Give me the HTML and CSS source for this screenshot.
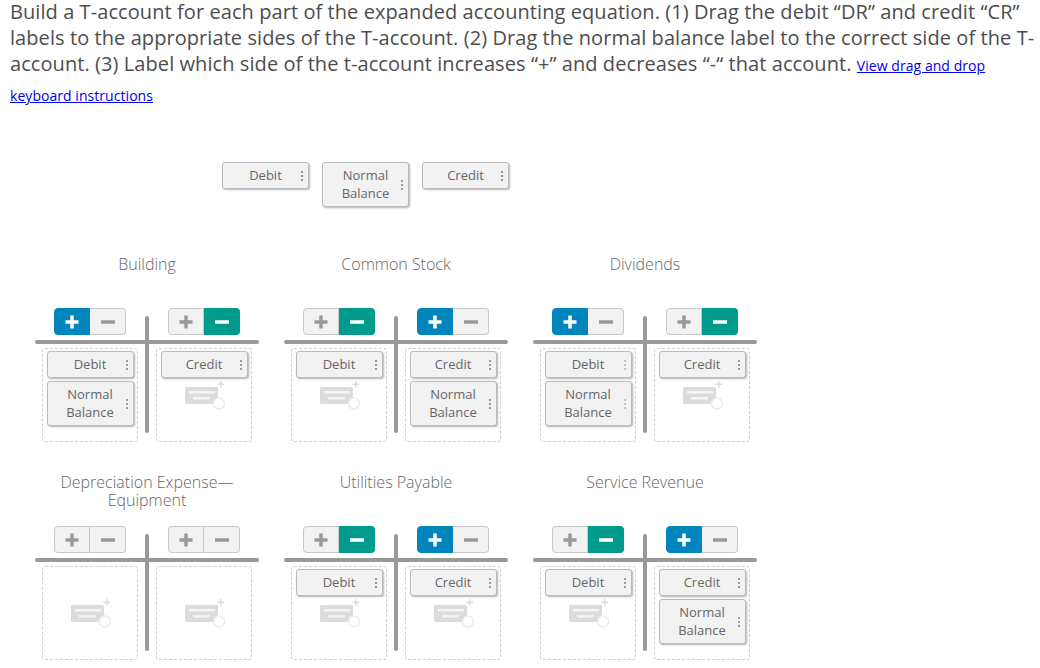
FILE: index.html
```html
<!DOCTYPE html>
<html lang="en">

<head>
    <meta charset="UTF-8">
    <meta name="viewport" content="width=device-width, initial-scale=1.0">
    <title>T-accounts</title>
    <link rel="stylesheet" href="styles.css">
</head>

<body>
    <svg class="icon-defs" width="0" height="0">
        <symbol id="icon-plus" viewBox="0 0 14 14">
            <path d="M5.250 0.500h3.500v4.750h4.750v3.500h-4.750v4.750h-3.500v-4.750h-4.750v-3.500h4.750z" fill="currentColor" />
        </symbol>
        <symbol id="icon-minus" viewBox="0 0 14 14">
            <rect x="0" y="5.250" width="14" height="3.500" fill="currentColor" />
        </symbol>
        <symbol id="icon-drop" viewBox="0 0 42 32">
            <rect x="2" y="8" width="33" height="17" rx="1.500" fill="#dcdcdc" />
            <rect x="6" y="12" width="26" height="2.500" fill="#f4f4f4" />
            <rect x="10" y="18" width="17" height="2.500" fill="#f4f4f4" />
            <circle cx="36" cy="24.500" r="5.500" fill="#fff" stroke="#ececec" stroke-width="1.500" />
            <path d="M37 2h1.500v2.500h2.500v1.500h-2.500v2.500h-1.500v-2.500h-2.500v-1.500h2.500z" fill="#dcdcdc" />
        </symbol>
    </svg>

    <p class="intro">
        Build a T-account for each part of the expanded accounting equation. (1) Drag the debit “DR” and credit “CR” labels to the appropriate sides of the T-account. (2) Drag the normal balance label to the correct side of the T-account. (3) Label which side of the t-account increases “+” and decreases “-“ that account.
        <a class="help-link" href="#">View drag and drop</a>
        <a class="help-link help-link-rest" href="#">keyboard instructions</a>
    </p>

    <div class="label-bank">
        <div class="tag">Debit</div>
        <div class="tag">Normal<br>Balance</div>
        <div class="tag">Credit</div>
    </div>

    <div class="account-grid">
        <!-- Building -->
        <section class="account">
            <h2 class="account-title">Building</h2>
            <div class="t-account">
                <div class="side-head">
                    <div class="sign-toggle">
                        <button class="sign-btn plus-on"><svg><use href="#icon-plus" /></svg></button>
                        <button class="sign-btn"><svg><use href="#icon-minus" /></svg></button>
                    </div>
                    <div class="sign-toggle">
                        <button class="sign-btn"><svg><use href="#icon-plus" /></svg></button>
                        <button class="sign-btn minus-on"><svg><use href="#icon-minus" /></svg></button>
                    </div>
                </div>
                <div class="t-rule"></div>
                <div class="side-body">
                    <div class="drop-zone">
                        <div class="tag">Debit</div>
                        <div class="tag">Normal<br>Balance</div>
                    </div>
                    <div class="drop-zone">
                        <div class="tag">Credit</div>
                        <svg class="drop-icon"><use href="#icon-drop" /></svg>
                    </div>
                </div>
            </div>
        </section>

        <!-- Common Stock -->
        <section class="account">
            <h2 class="account-title">Common Stock</h2>
            <div class="t-account">
                <div class="side-head">
                    <div class="sign-toggle">
                        <button class="sign-btn"><svg><use href="#icon-plus" /></svg></button>
                        <button class="sign-btn minus-on"><svg><use href="#icon-minus" /></svg></button>
                    </div>
                    <div class="sign-toggle">
                        <button class="sign-btn plus-on"><svg><use href="#icon-plus" /></svg></button>
                        <button class="sign-btn"><svg><use href="#icon-minus" /></svg></button>
                    </div>
                </div>
                <div class="t-rule"></div>
                <div class="side-body">
                    <div class="drop-zone">
                        <div class="tag">Debit</div>
                        <svg class="drop-icon"><use href="#icon-drop" /></svg>
                    </div>
                    <div class="drop-zone">
                        <div class="tag">Credit</div>
                        <div class="tag">Normal<br>Balance</div>
                    </div>
                </div>
            </div>
        </section>

        <!-- Dividends -->
        <section class="account">
            <h2 class="account-title">Dividends</h2>
            <div class="t-account">
                <div class="side-head">
                    <div class="sign-toggle">
                        <button class="sign-btn plus-on"><svg><use href="#icon-plus" /></svg></button>
                        <button class="sign-btn"><svg><use href="#icon-minus" /></svg></button>
                    </div>
                    <div class="sign-toggle">
                        <button class="sign-btn"><svg><use href="#icon-plus" /></svg></button>
                        <button class="sign-btn minus-on"><svg><use href="#icon-minus" /></svg></button>
                    </div>
                </div>
                <div class="t-rule"></div>
                <div class="side-body">
                    <div class="drop-zone">
                        <div class="tag faint-dots">Debit</div>
                        <div class="tag faint-dots">Normal<br>Balance</div>
                    </div>
                    <div class="drop-zone">
                        <div class="tag">Credit</div>
                        <svg class="drop-icon"><use href="#icon-drop" /></svg>
                    </div>
                </div>
            </div>
        </section>

        <!-- Depreciation Expense -->
        <section class="account">
            <h2 class="account-title">Depreciation Expense—Equipment</h2>
            <div class="t-account">
                <div class="side-head">
                    <div class="sign-toggle">
                        <button class="sign-btn"><svg><use href="#icon-plus" /></svg></button>
                        <button class="sign-btn"><svg><use href="#icon-minus" /></svg></button>
                    </div>
                    <div class="sign-toggle">
                        <button class="sign-btn"><svg><use href="#icon-plus" /></svg></button>
                        <button class="sign-btn"><svg><use href="#icon-minus" /></svg></button>
                    </div>
                </div>
                <div class="t-rule"></div>
                <div class="side-body">
                    <div class="drop-zone empty">
                        <svg class="drop-icon"><use href="#icon-drop" /></svg>
                    </div>
                    <div class="drop-zone empty">
                        <svg class="drop-icon"><use href="#icon-drop" /></svg>
                    </div>
                </div>
            </div>
        </section>

        <!-- Utilities Payable -->
        <section class="account">
            <h2 class="account-title">Utilities Payable</h2>
            <div class="t-account">
                <div class="side-head">
                    <div class="sign-toggle">
                        <button class="sign-btn"><svg><use href="#icon-plus" /></svg></button>
                        <button class="sign-btn minus-on"><svg><use href="#icon-minus" /></svg></button>
                    </div>
                    <div class="sign-toggle">
                        <button class="sign-btn plus-on"><svg><use href="#icon-plus" /></svg></button>
                        <button class="sign-btn"><svg><use href="#icon-minus" /></svg></button>
                    </div>
                </div>
                <div class="t-rule"></div>
                <div class="side-body">
                    <div class="drop-zone">
                        <div class="tag">Debit</div>
                        <svg class="drop-icon"><use href="#icon-drop" /></svg>
                    </div>
                    <div class="drop-zone">
                        <div class="tag">Credit</div>
                        <svg class="drop-icon"><use href="#icon-drop" /></svg>
                    </div>
                </div>
            </div>
        </section>

        <!-- Service Revenue -->
        <section class="account">
            <h2 class="account-title">Service Revenue</h2>
            <div class="t-account">
                <div class="side-head">
                    <div class="sign-toggle">
                        <button class="sign-btn"><svg><use href="#icon-plus" /></svg></button>
                        <button class="sign-btn minus-on"><svg><use href="#icon-minus" /></svg></button>
                    </div>
                    <div class="sign-toggle">
                        <button class="sign-btn plus-on"><svg><use href="#icon-plus" /></svg></button>
                        <button class="sign-btn"><svg><use href="#icon-minus" /></svg></button>
                    </div>
                </div>
                <div class="t-rule"></div>
                <div class="side-body">
                    <div class="drop-zone">
                        <div class="tag">Debit</div>
                        <svg class="drop-icon"><use href="#icon-drop" /></svg>
                    </div>
                    <div class="drop-zone">
                        <div class="tag">Credit</div>
                        <div class="tag">Normal<br>Balance</div>
                    </div>
                </div>
            </div>
        </section>
    </div>
</body>

</html>
```

FILE: styles.css
```css
* {
    box-sizing: border-box;
}

body {
    margin: 0;
    font-family: "Open Sans", "Liberation Sans", sans-serif;
    color: #666;
    background-color: #fff;
    overflow: hidden;
}

.icon-defs {
    position: absolute;
}

.intro {
    margin: -1px 0 0;
    padding: 0 0 0 10px;
    font-size: 20px;
    line-height: 26px;
    letter-spacing: 0.075px;
    color: #4d4d4d;
}

.help-link {
    font-size: 14px;
    letter-spacing: 0.05px;
    color: #00e;
}

.help-link-rest {
    display: block;
    margin-top: 4px;
}

.label-bank {
    display: flex;
    align-items: flex-start;
    gap: 13px;
    margin: 53px 0 0 222px;
}

.tag {
    position: relative;
    width: 87px;
    flex-shrink: 0;
    padding: 3px 8px 4px;
    font-size: 13px;
    line-height: 18px;
    text-align: center;
    background-color: #f2f2f2;
    border: 1px solid #bbb;
    border-radius: 3px;
    box-shadow: 1px 1px 2px rgba(0, 0, 0, 0.3);
}

.tag::after {
    content: "";
    position: absolute;
    right: 5px;
    top: 50%;
    width: 2px;
    height: 10px;
    margin-top: -5px;
    background: repeating-linear-gradient(#999 0 2px, transparent 2px 4px);
}

.faint-dots::after {
    background: repeating-linear-gradient(#c4c4c4 0 2px, transparent 2px 4px);
}

.account-grid {
    display: grid;
    grid-template-columns: repeat(3, 224px);
    column-gap: 25px;
    row-gap: 31px;
    margin: 48px 0 0 35px;
}

.account-title {
    height: 53px;
    margin: 0;
    padding: 0 10px;
    font-size: 16px;
    font-weight: 300;
    line-height: 18px;
    text-align: center;
}

.t-account {
    position: relative;
}

/* stem of the T, sits over the rule */
.t-account::before {
    content: "";
    position: absolute;
    left: 110px;
    top: 8px;
    width: 4px;
    height: 117px;
    background-color: #999;
    border-radius: 2px;
}

.side-head,
.side-body {
    display: grid;
    grid-template-columns: 114px 114px;
    justify-content: center;
    justify-items: center;
}

.sign-toggle {
    display: flex;
    width: 72px;
    height: 27px;
}

.sign-btn {
    width: 36px;
    height: 27px;
    padding: 0;
    display: flex;
    align-items: center;
    justify-content: center;
    color: #999;
    background-color: #f2f2f2;
    border: 1px solid #c8c8c8;
}

.sign-btn:first-child {
    border-radius: 4px 0 0 4px;
}

.sign-btn:last-child {
    border-left: none;
    border-radius: 0 4px 4px 0;
}

.sign-btn svg {
    width: 14px;
    height: 14px;
}

.plus-on {
    color: #fff;
    background-color: #0085bd;
    border-color: #0085bd;
}

.minus-on {
    color: #fff;
    background-color: #009b8c;
    border-color: #009b8c;
}

.t-rule {
    height: 4px;
    margin: 5px 0 4px;
    background-color: #999;
    border-radius: 2px;
}

.drop-zone {
    display: flex;
    flex-direction: column;
    align-items: center;
    gap: 3px;
    width: 96px;
    height: 94px;
    padding-top: 2px;
    border: 1px dashed #d0d0d0;
    border-radius: 3px;
}

.drop-zone.empty {
    justify-content: center;
    padding-top: 0;
}

.drop-icon {
    width: 42px;
    height: 32px;
    flex-shrink: 0;
    margin-top: -2px;
}

.drop-zone.empty .drop-icon {
    margin-top: 0;
}
```
